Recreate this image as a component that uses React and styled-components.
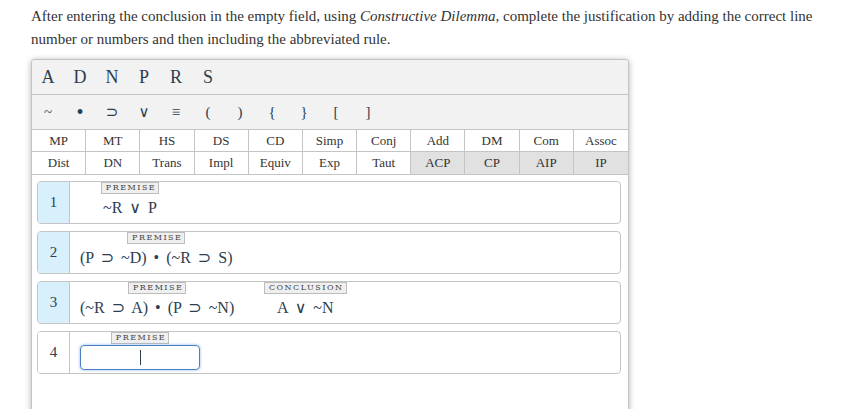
import React from 'react';
import styled, { createGlobalStyle } from 'styled-components';

const GlobalStyle = createGlobalStyle`
  body {
    margin: 0;
    background: #fff;
    font-family: "Liberation Serif", "Times New Roman", serif;
  }
`;

const letters = ['A', 'D', 'N', 'P', 'R', 'S'];
const symbols = ['~', '•', '⊃', '∨', '≡', '(', ')', '{', '}', '[', ']'];

const rules = [
  ['MP', 'MT', 'HS', 'DS', 'CD', 'Simp', 'Conj', 'Add', 'DM', 'Com', 'Assoc'],
  ['Dist', 'DN', 'Trans', 'Impl', 'Equiv', 'Exp', 'Taut', 'ACP', 'CP', 'AIP', 'IP'],
];
const shaded = ['ACP', 'CP', 'AIP', 'IP'];

const lines = [
  { n: 1, done: true, items: [{ tag: 'Premise', text: '~R ∨ P' }] },
  { n: 2, done: true, items: [{ tag: 'Premise', text: '(P ⊃ ~D) • (~R ⊃ S)' }] },
  {
    n: 3,
    done: true,
    items: [
      { tag: 'Premise', text: '(~R ⊃ A) • (P ⊃ ~N)' },
      { tag: 'Conclusion', text: 'A ∨ ~N' },
    ],
  },
  { n: 4, done: false, items: [{ tag: 'Premise', input: true }] },
];

function App() {
  return (
    <Page>
      <GlobalStyle />
      <Prompt>
        After entering the conclusion in the empty field, using <em>Constructive Dilemma,</em> complete
        the justification by adding the correct line number or numbers and then including the
        abbreviated rule.
      </Prompt>

      <Panel>
        <KeyBar>
          {letters.map((l) => (
            <KeyButton key={l} $size={18}>{l}</KeyButton>
          ))}
        </KeyBar>
        <KeyBar>
          {symbols.map((s) => (
            <KeyButton key={s} $size={s === '•' ? 20 : 15}>{s}</KeyButton>
          ))}
        </KeyBar>

        <RuleGrid>
          {rules.flat().map((r) => (
            <RuleCell key={r} $shaded={shaded.includes(r)}>{r}</RuleCell>
          ))}
        </RuleGrid>

        <Proof>
          {lines.map((line) => (
            <ProofLine key={line.n}>
              <LineNum $done={line.done}>{line.n}</LineNum>
              <LineBody>
                {line.items.map((item) => (
                  <Statement key={item.tag}>
                    <Tag>{item.tag}</Tag>
                    {item.input ? (
                      <FormulaInput>
                        <Caret />
                      </FormulaInput>
                    ) : (
                      <Formula>{item.text}</Formula>
                    )}
                  </Statement>
                ))}
              </LineBody>
            </ProofLine>
          ))}
        </Proof>
      </Panel>
    </Page>
  );
}

const Page = styled.div`
  padding: 5px 0 0 31px;
`;

const Prompt = styled.p`
  margin: 0;
  width: 800px;
  font-size: 15px;
  line-height: 23px;
  color: #333;

  em {
    font-style: italic;
  }
`;

const Panel = styled.div`
  margin-top: 8px;
  width: 596px;
  height: 360px;
  border: 1px solid #c4c4c4;
  border-bottom: none;
  border-radius: 4px 4px 0 0;
  background: #fff;
  box-shadow: 0 1px 6px rgba(0, 0, 0, 0.3);
  overflow: hidden;
`;

const KeyBar = styled.div`
  display: flex;
  align-items: center;
  height: 34px;
  background: #f2f2f2;
  border-bottom: 1px solid #c4c4c4;
`;

const KeyButton = styled.span`
  width: 32px;
  text-align: center;
  font-family: "Liberation Serif", "DejaVu Sans", serif;
  font-size: ${(p) => p.$size}px;
  color: #2c3e50;
  cursor: pointer;
`;

const RuleGrid = styled.div`
  display: grid;
  grid-template-columns: repeat(11, 1fr);
  grid-auto-rows: 22px;
  border-bottom: 1px solid #c4c4c4;
`;

const RuleCell = styled.div`
  display: flex;
  align-items: center;
  justify-content: center;
  font-size: 13px;
  color: #333;
  background: ${(p) => (p.$shaded ? '#e1e1e1' : '#fff')};
  border-right: 1px solid #c4c4c4;
  border-bottom: 1px solid #c4c4c4;

  &:nth-child(11n) {
    border-right: none;
  }
  &:nth-child(n + 12) {
    border-bottom: none;
  }
`;

const Proof = styled.div`
  display: flex;
  flex-direction: column;
  gap: 7px;
  padding: 6px 7px 0 5px;
`;

const ProofLine = styled.div`
  display: flex;
  height: 41px;
  border: 1px solid #c4c4c4;
  border-radius: 4px;
  overflow: hidden;
`;

const LineNum = styled.div`
  width: 31px;
  display: flex;
  align-items: center;
  justify-content: center;
  background: ${(p) => (p.$done ? '#d7f0fc' : '#fff')};
  border-right: 1px solid #c4c4c4;
  font-size: 15px;
  color: #2c3e50;
`;

const LineBody = styled.div`
  display: flex;
  gap: 21px;
  padding-left: 10px;
`;

const Statement = styled.div`
  display: flex;
  flex-direction: column;
  align-items: center;
  min-width: 100px;
`;

const Tag = styled.span`
  font-family: "DejaVu Serif", serif;
  font-size: 8px;
  line-height: 10px;
  letter-spacing: 1.5px;
  text-transform: uppercase;
  color: #444;
  background: #efefef;
  border: 1px solid #bdbdbd;
  padding: 0 2px 0 4px;
`;

const Formula = styled.span`
  margin-top: 4px;
  font-family: "Liberation Serif", "DejaVu Sans", serif;
  font-size: 16px;
  color: #2c3e50;
  word-spacing: 3px;
  white-space: nowrap;
`;

const FormulaInput = styled.div`
  margin-top: 1px;
  width: 118px;
  height: 23px;
  display: flex;
  align-items: center;
  justify-content: center;
  border: 1px solid #4a7fc0;
  border-radius: 4px;
  box-shadow: 0 0 3px rgba(80, 150, 240, 0.7);
`;

const Caret = styled.span`
  width: 1px;
  height: 15px;
  background: #2c3e50;
`;

export default App;
